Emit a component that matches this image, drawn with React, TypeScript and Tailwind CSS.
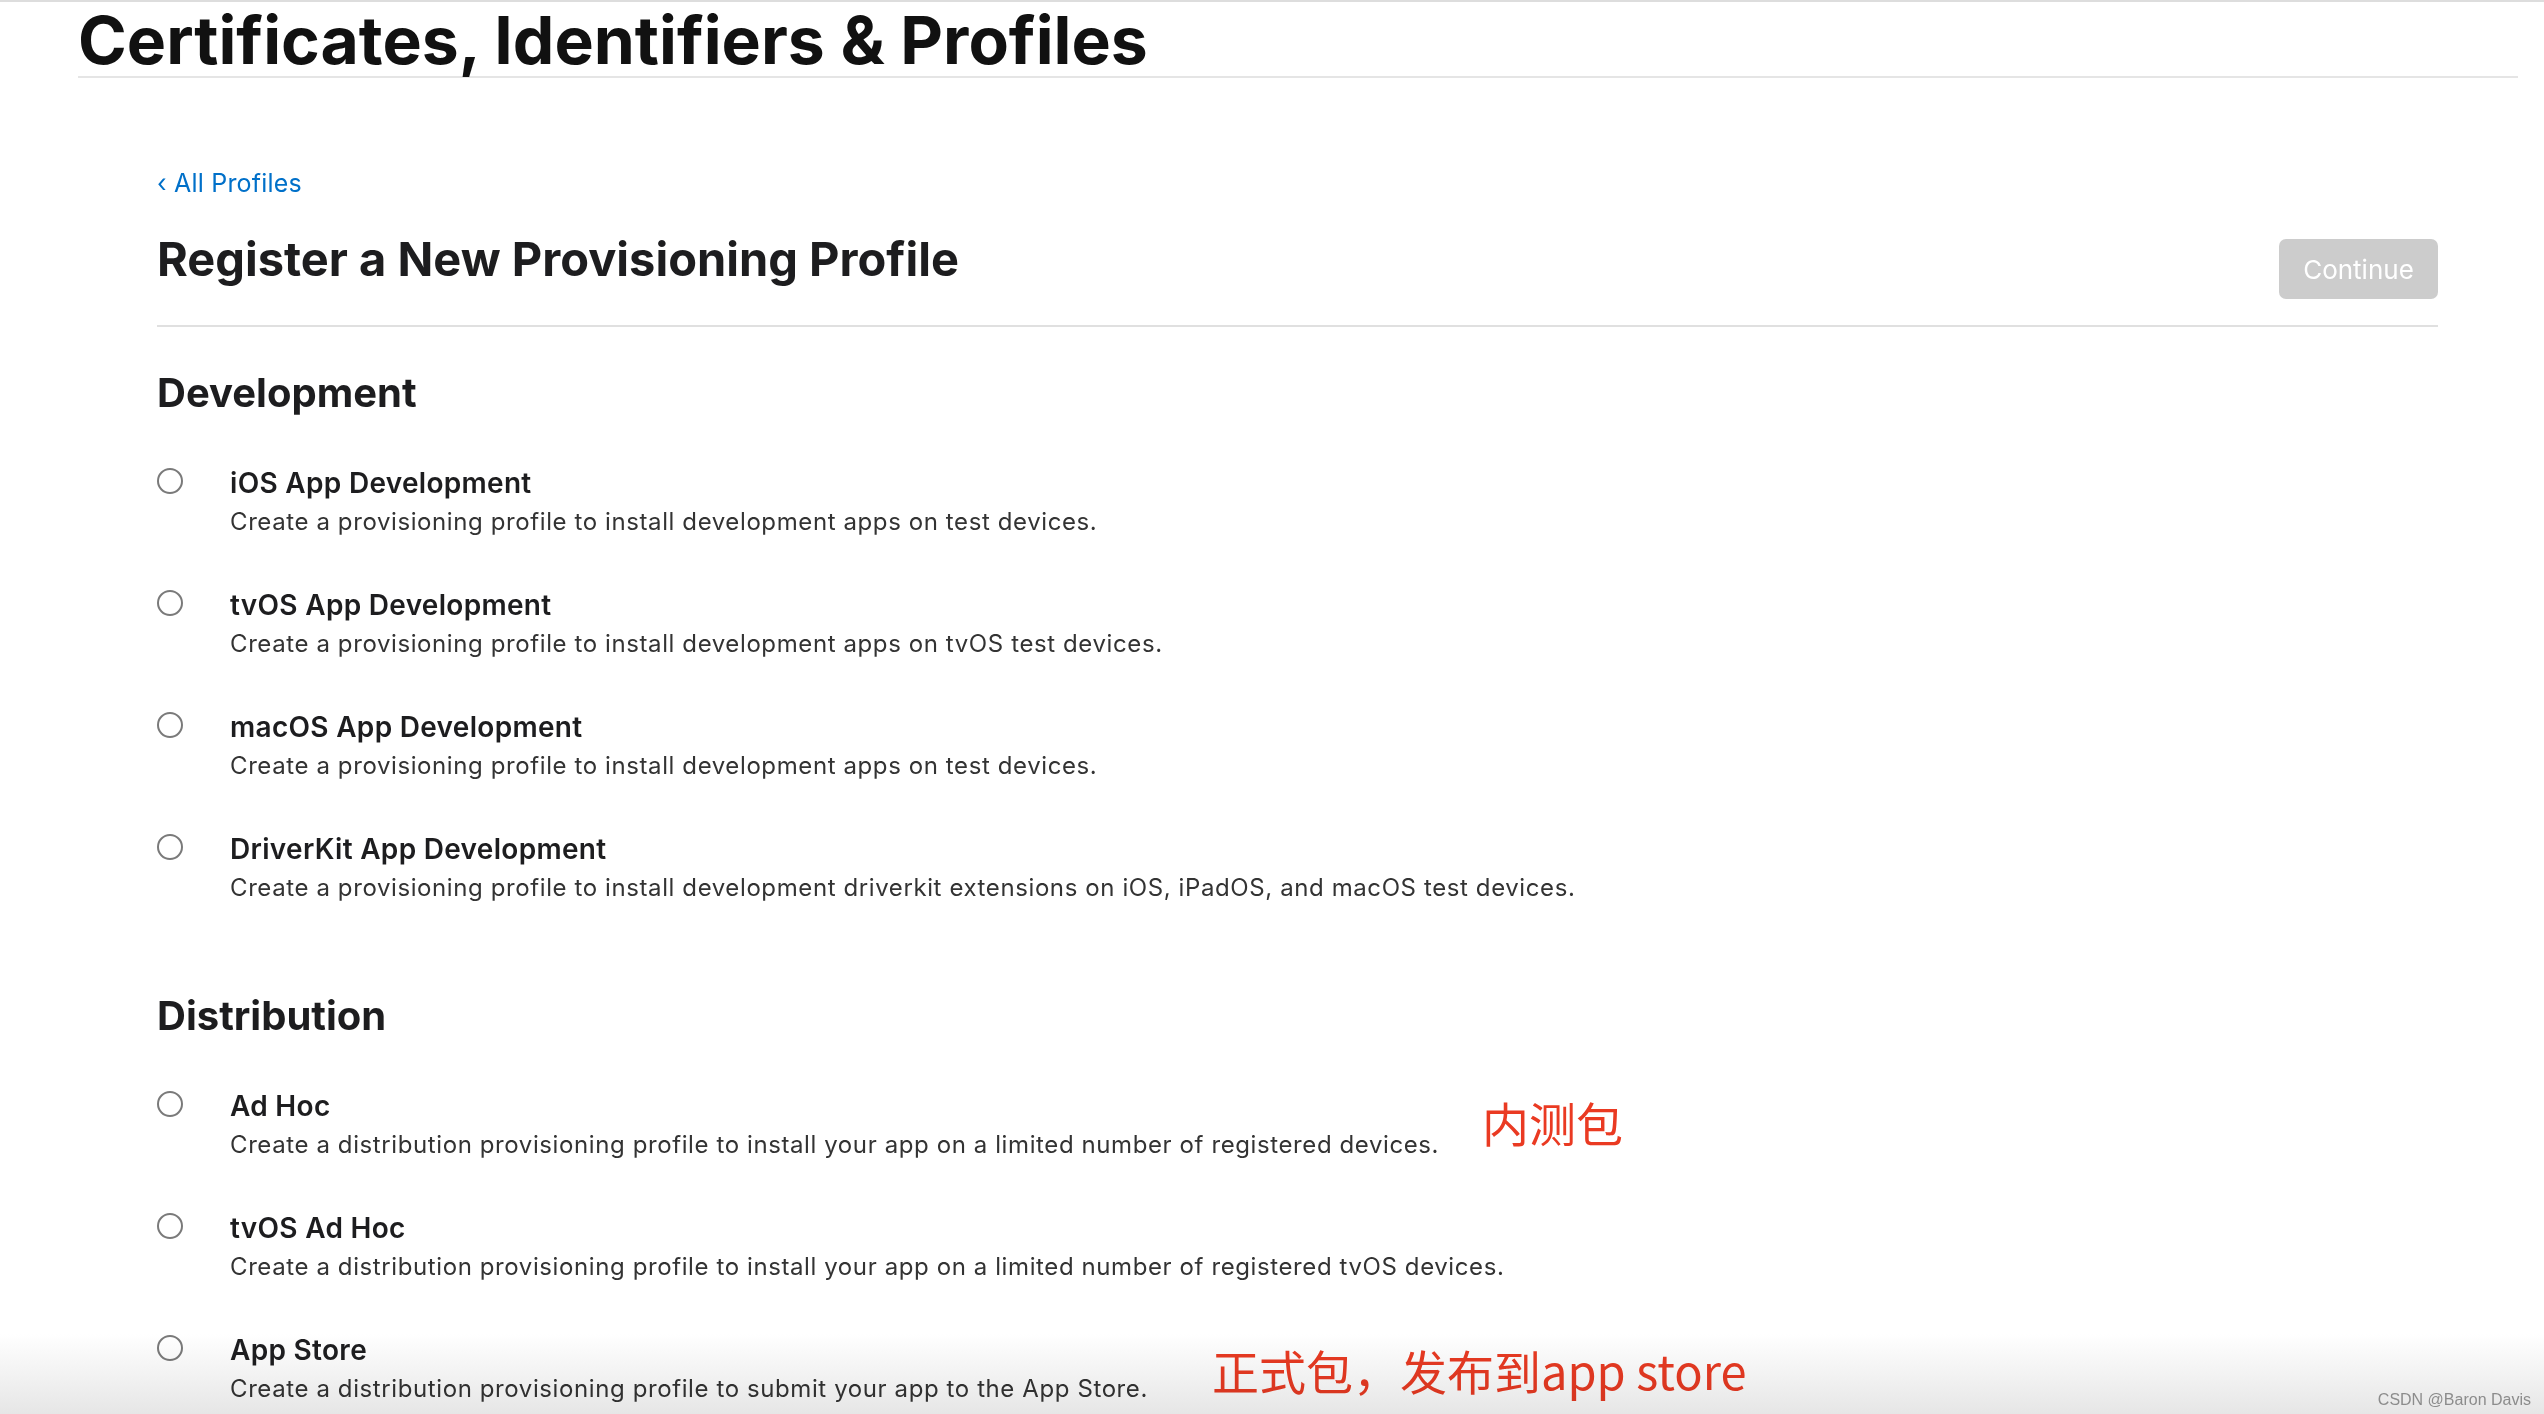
import React from 'react';

interface ProfileOption {
  title: string;
  desc: string;
}

const development: ProfileOption[] = [
  { title: 'iOS App Development', desc: 'Create a provisioning profile to install development apps on test devices.' },
  { title: 'tvOS App Development', desc: 'Create a provisioning profile to install development apps on tvOS test devices.' },
  { title: 'macOS App Development', desc: 'Create a provisioning profile to install development apps on test devices.' },
  { title: 'DriverKit App Development', desc: 'Create a provisioning profile to install development driverkit extensions on iOS, iPadOS, and macOS test devices.' },
];

const distribution: ProfileOption[] = [
  { title: 'Ad Hoc', desc: 'Create a distribution provisioning profile to install your app on a limited number of registered devices.' },
  { title: 'tvOS Ad Hoc', desc: 'Create a distribution provisioning profile to install your app on a limited number of registered tvOS devices.' },
  { title: 'App Store', desc: 'Create a distribution provisioning profile to submit your app to the App Store.' },
];

const OptionRow: React.FC<{ option: ProfileOption }> = ({ option }) => (
  <div className="flex items-start">
    {/* Radio */}
    <div className="w-[73px] shrink-0 pt-[3px]">
      <div className="w-[26px] h-[26px] rounded-full border-2 border-[#7a7a7a] bg-white"></div>
    </div>
    <div>
      <div className="text-[28px] leading-[37px] font-semibold tracking-[0.3px] text-[#1d1d1f]">{option.title}</div>
      <div className="text-[24px] leading-[40px] tracking-[0.6px] text-[#333333]">{option.desc}</div>
    </div>
  </div>
);

const Section: React.FC<{ title: string; options: ProfileOption[] }> = ({ title, options }) => (
  <section>
    <h2 className="text-[40px] leading-[48px] font-bold text-[#1d1d1f]">{title}</h2>
    <div className="mt-[48px] flex flex-col gap-[45px]">
      {options.map((o) => (
        <OptionRow key={o.title} option={o} />
      ))}
    </div>
  </section>
);

export default function App() {
  return (
    <div
      className="relative min-h-screen w-full overflow-hidden bg-white border-t-2 border-[#dddddd]"
      style={{ fontFamily: 'Inter, "Noto Sans", sans-serif' }}
    >
      {/* Header */}
      <header className="ml-[78px] mr-[26px] pt-[4px] pb-[2px] border-b-2 border-[#e5e5e5]">
        <h1 className="text-[66px] leading-[68px] font-bold text-[#111111]">
          Certificates, Identifiers &amp; Profiles
        </h1>
      </header>

      {/* Main */}
      <main className="ml-[157px] mr-[106px] pt-[90px]">
        <a href="#" className="block text-[25px] leading-[30px] tracking-[0.2px] text-[#0070c9]">
          ‹ All Profiles
        </a>

        <div className="mt-[33px] flex items-start justify-between">
          <h1 className="text-[47px] leading-[56px] font-bold text-[#1d1d1f]">Register a New Provisioning Profile</h1>
          <button className="mt-[8px] w-[159px] h-[60px] rounded-[7px] bg-[#cccccc] text-white text-[26px]">
            Continue
          </button>
        </div>

        <div className="mt-[26px] h-[2px] bg-[#e0e0e0]"></div>

        <div className="mt-[42px]">
          <Section title="Development" options={development} />
        </div>

        <div className="mt-[84px]">
          <Section title="Distribution" options={distribution} />
        </div>
      </main>

      {/* Annotations */}
      <div
        className="absolute left-[1482px] top-[1096px] text-[47px] leading-none text-[#ea3a22]"
        style={{ fontFamily: '"Noto Sans CJK SC", sans-serif' }}
      >
        内测包
      </div>
      <div
        className="absolute left-[1212px] top-[1344px] text-[47px] leading-none text-[#ea3a22]"
        style={{ fontFamily: '"Noto Sans CJK SC", sans-serif' }}
      >
        正式包，发布到app store
      </div>

      {/* Bottom shade */}
      <div className="pointer-events-none absolute bottom-0 left-0 right-0 h-[80px] mix-blend-multiply bg-linear-to-b from-white to-[#e6e6e6]"></div>

      <div
        className="absolute right-[13px] bottom-[6px] text-[16px] leading-none text-[#8c8c8c]"
        style={{ fontFamily: '"Liberation Sans", Arial, sans-serif' }}
      >
        CSDN @Baron Davis
      </div>
    </div>
  );
}
